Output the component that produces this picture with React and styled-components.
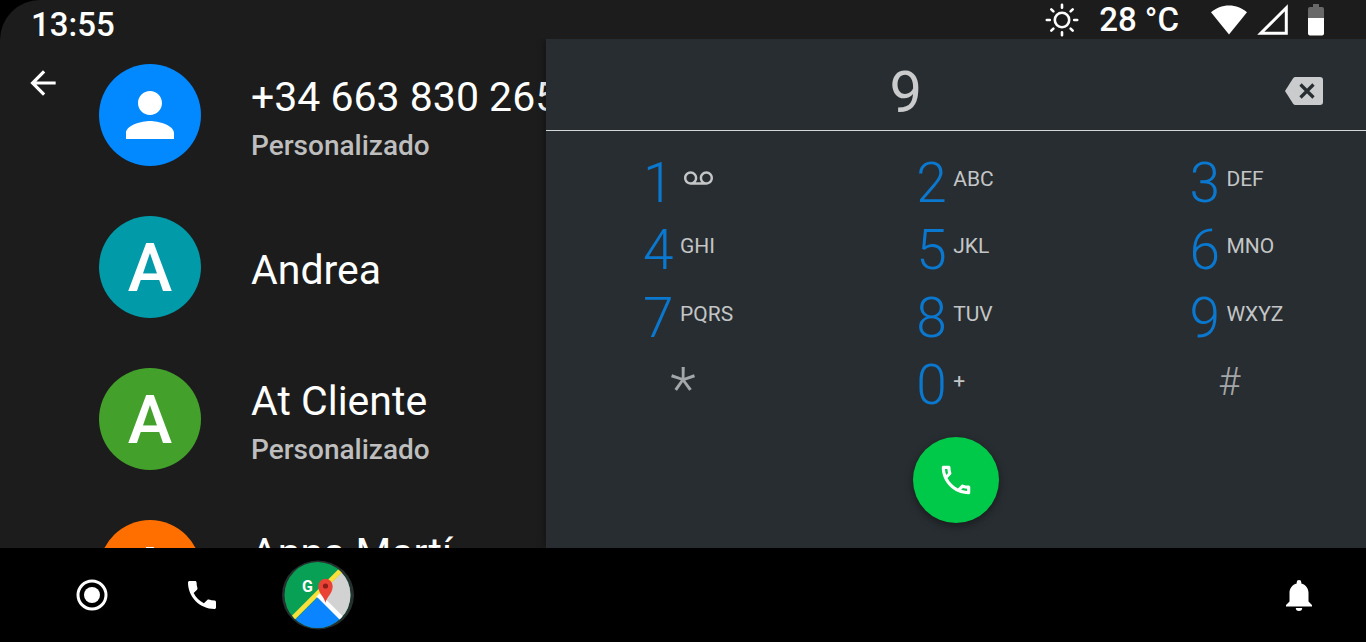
import React from 'react';
import styled, { createGlobalStyle } from 'styled-components';

const contacts = [
    { id: 1, name: '+34 663 830 265', label: 'Personalizado', color: '#0288ff' },
    { id: 2, name: 'Andrea', letter: 'A', color: '#009aa9' },
    { id: 3, name: 'At Cliente', label: 'Personalizado', letter: 'A', color: '#43a12b' },
    { id: 4, name: 'Anna Martí', label: '', letter: 'A', color: '#ff6f00' },
];

const keys = [
    { digit: '1', voicemail: true },
    { digit: '2', letters: 'ABC' },
    { digit: '3', letters: 'DEF' },
    { digit: '4', letters: 'GHI' },
    { digit: '5', letters: 'JKL' },
    { digit: '6', letters: 'MNO' },
    { digit: '7', letters: 'PQRS' },
    { digit: '8', letters: 'TUV' },
    { digit: '9', letters: 'WXYZ' },
    { digit: '*' },
    { digit: '0', letters: '+' },
    { digit: '#' },
];

const SunIcon = () => (
    <svg width="34" height="34" viewBox="0 0 34 34" fill="none" stroke="#fff" strokeWidth="2.6" strokeLinecap="round">
        <circle cx="17" cy="17" r="7.2" />
        <path d="M17 1.8v3M17 29.2v3M1.8 17h3M29.2 17h3M6.3 6.3l2.1 2.1M25.6 25.6l2.1 2.1M6.3 27.7l2.1-2.1M25.6 8.4l2.1-2.1" />
    </svg>
);

const WifiIcon = () => (
    <svg width="36" height="30" viewBox="0 0 36 30" fill="#fff">
        <path d="M18 29.5L0 7.2C5 3 11.2 .5 18 .5s13 2.5 18 6.7z" />
    </svg>
);

const SignalIcon = () => (
    <svg width="31" height="31" viewBox="0 0 31 31" fill="none" stroke="#fff" strokeWidth="3">
        <path d="M29.3 3.8V29.3H3.8z" />
    </svg>
);

const BatteryIcon = () => (
    <svg width="16" height="32" viewBox="0 0 16 32">
        <path d="M5 0h6v3h3a2 2 0 0 1 2 2v9H0V5a2 2 0 0 1 2-2h3z" fill="#686868" />
        <path d="M0 14h16v15.5a2 2 0 0 1-2 2H2a2 2 0 0 1-2-2z" fill="#fff" />
    </svg>
);

const BackIcon = () => (
    <svg width="38" height="38" viewBox="0 0 24 24" fill="#fff">
        <path d="M20 11H7.83l5.59-5.59L12 4l-8 8 8 8 1.41-1.41L7.83 13H20z" />
    </svg>
);

const PersonIcon = () => (
    <svg width="48" height="48" viewBox="4 4 16 16" fill="#fff">
        <path d="M12 12c2.21 0 4-1.79 4-4s-1.79-4-4-4-4 1.79-4 4 1.79 4 4 4zm0 2c-2.67 0-8 1.34-8 4v2h16v-2c0-2.66-5.33-4-8-4z" />
    </svg>
);

const BackspaceIcon = () => (
    <svg width="38" height="28" viewBox="0 0 38 28">
        <path d="M10.5 0H35a3 3 0 0 1 3 3v22a3 3 0 0 1-3 3H10.5a3 3 0 0 1-2.4-1.3L0 14 8.1 1.3A3 3 0 0 1 10.5 0z" fill="#c9cbcc" />
        <path d="M15.5 7.5l13 13M28.5 7.5l-13 13" stroke="#282d31" strokeWidth="3.2" />
    </svg>
);

const VoicemailIcon = () => (
    <svg width="29" height="14" viewBox="0 6 24 11" fill="#c3c5c6">
        <path d="M18.5 6C15.46 6 13 8.46 13 11.5c0 1.33.47 2.55 1.26 3.5H9.74c.79-.95 1.26-2.17 1.26-3.5C11 8.46 8.54 6 5.5 6S0 8.46 0 11.5 2.46 17 5.5 17h13c3.04 0 5.5-2.46 5.5-5.5S21.54 6 18.5 6zm-13 9C3.57 15 2 13.43 2 11.5S3.57 8 5.5 8 9 9.57 9 11.5 7.43 15 5.5 15zm13 0c-1.93 0-3.5-1.57-3.5-3.5S16.57 8 18.5 8 22 9.57 22 11.5 20.43 15 18.5 15z" />
    </svg>
);

const CallIcon = () => (
    <svg width="38" height="38" viewBox="0 0 24 24" fill="#fff">
        <path d="M6.54 5c.06.89.21 1.76.45 2.59l-1.2 1.2c-.41-1.2-.67-2.47-.76-3.79h1.51m9.86 12.02c.85.24 1.72.39 2.6.45v1.49c-1.32-.09-2.59-.35-3.8-.75l1.2-1.19M7.5 3H4c-.55 0-1 .45-1 1 0 9.39 7.61 17 17 17 .55 0 1-.45 1-1v-3.49c0-.55-.45-1-1-1-1.24 0-2.45-.2-3.57-.57-.1-.04-.21-.05-.31-.05-.26 0-.51.1-.71.29l-2.2 2.2c-2.83-1.45-5.15-3.76-6.59-6.59l2.2-2.2c.28-.28.36-.67.25-1.02C8.7 6.45 8.5 5.25 8.5 4c0-.55-.45-1-1-1z" />
    </svg>
);

const HomeIcon = () => (
    <svg width="32" height="32" viewBox="0 0 32 32">
        <circle cx="16" cy="16" r="14" fill="none" stroke="#fff" strokeWidth="3" />
        <circle cx="16" cy="16" r="8" fill="#fff" />
    </svg>
);

const PhoneIcon = () => (
    <svg width="28" height="28" viewBox="3 3 18 18" fill="#fff">
        <path d="M6.62 10.79c1.44 2.83 3.76 5.14 6.59 6.59l2.2-2.2c.27-.27.67-.36 1.02-.24 1.12.37 2.33.57 3.57.57.55 0 1 .45 1 1V20c0 .55-.45 1-1 1-9.39 0-17-7.61-17-17 0-.55.45-1 1-1h3.5c.55 0 1 .45 1 1 0 1.25.2 2.45.57 3.57.11.35.03.74-.25 1.02l-2.2 2.2z" />
    </svg>
);

const MapsIcon = () => (
    <svg width="72" height="70" viewBox="0 0 72 70">
        <defs>
            <clipPath id="mapDisc">
                <circle cx="35.5" cy="35" r="33" />
            </clipPath>
        </defs>
        <ellipse cx="36" cy="35" rx="36" ry="34.5" fill="#25302f" />
        <g clipPath="url(#mapDisc)">
            <rect width="72" height="70" fill="#08a055" />
            <path d="M35 37L72 0v70z" fill="#d2d2d2" />
            <path d="M6 63L62 7" stroke="#f9e03a" strokeWidth="4.6" />
            <path d="M36 35l30 30" stroke="#fff" strokeWidth="5" />
            <path d="M35.5 37.5L69 71H2z" fill="#0a84ff" />
        </g>
        <text x="20" y="32" fill="#fff" fontFamily="Roboto, sans-serif" fontWeight="700" fontSize="16">G</text>
        <path d="M43.5 43c-.8-6-7.2-9-7.2-17a7.2 7.2 0 0 1 14.4 0c0 8-6.4 11-7.2 17z" fill="#ea4335" />
        <circle cx="43.5" cy="26" r="2.6" fill="#8c1d18" />
    </svg>
);

const BellIcon = () => (
    <svg width="26" height="31" viewBox="0 0 26 31" fill="#fff">
        <path d="M13 0a2.3 2.3 0 0 0-2.3 2.3v1.2C6.3 4.6 3.5 8.4 3.5 13v8.5L0 25v1.5h26V25l-3.5-3.5V13c0-4.6-2.8-8.4-7.2-9.5V2.3A2.3 2.3 0 0 0 13 0z" />
        <path d="M9.8 28h6.4a3.2 3 0 0 1-6.4 0z" />
    </svg>
);

const App = () => {
    const [number, setNumber] = React.useState('9');

    return (
        <>
            <GlobalStyles />
            <Wrapper>
                <Screen>
                    <StatusBar>
                        <Clock>13:55</Clock>
                        <StatusItems>
                            <SunIcon />
                            <Temperature>28 °C</Temperature>
                            <WifiIcon />
                            <SignalIcon />
                            <Battery>
                                <BatteryIcon />
                            </Battery>
                        </StatusItems>
                    </StatusBar>
                    <Content>
                        <ContactsPanel>
                            <BackButton aria-label="Atrás">
                                <BackIcon />
                            </BackButton>
                            <ContactList>
                                {contacts.map((contact) => (
                                    <Contact key={contact.id}>
                                        <Avatar $color={contact.color}>
                                            {contact.letter ? <Initial>{contact.letter}</Initial> : <PersonIcon />}
                                        </Avatar>
                                        <ContactText>
                                            <Name>{contact.name}</Name>
                                            {contact.label !== undefined && <Label>{contact.label}</Label>}
                                        </ContactText>
                                    </Contact>
                                ))}
                            </ContactList>
                        </ContactsPanel>
                        <Dialer>
                            <NumberRow>
                                <NumberInput
                                    type="text"
                                    aria-label="Número"
                                    value={number}
                                    onChange={(ev) => setNumber(ev.target.value)}
                                />
                                <DeleteButton aria-label="Borrar" onClick={() => setNumber(number.slice(0, -1))}>
                                    <BackspaceIcon />
                                </DeleteButton>
                            </NumberRow>
                            <Keypad>
                                {keys.map(({ digit, letters, voicemail }) => {
                                    const isSymbol = !letters && !voicemail;
                                    return (
                                        <Key key={digit} onClick={() => setNumber(number + digit)}>
                                            {isSymbol ? (
                                                <KeySymbol $large={digit === '*'}>{digit}</KeySymbol>
                                            ) : (
                                                <KeyGroup>
                                                    <Digit>{digit}</Digit>
                                                    {voicemail ? <Voicemail><VoicemailIcon /></Voicemail> : <Letters>{letters}</Letters>}
                                                </KeyGroup>
                                            )}
                                        </Key>
                                    );
                                })}
                            </Keypad>
                            <CallButton aria-label="Llamar">
                                <CallIcon />
                            </CallButton>
                        </Dialer>
                    </Content>
                </Screen>
                <NavBar>
                    <NavGroup>
                        <NavButton $width="110px" aria-label="Inicio"><HomeIcon /></NavButton>
                        <NavButton $width="110px" aria-label="Teléfono"><PhoneIcon /></NavButton>
                        <NavButton $width="122px" aria-label="Maps"><MapsIcon /></NavButton>
                    </NavGroup>
                    <NavButton $width="72px" aria-label="Notificaciones"><BellIcon /></NavButton>
                </NavBar>
            </Wrapper>
        </>
    );
};

const GlobalStyles = createGlobalStyle`
    * {
        box-sizing: border-box;
    }
    body {
        margin: 0;
        background: #000;
        color: #fff;
        font-family: Roboto, sans-serif;
    }
    button {
        display: flex;
        align-items: center;
        justify-content: center;
        padding: 0;
        border: none;
        background: none;
        color: inherit;
        font-family: inherit;
        cursor: pointer;
    }
    svg {
        display: block;
        flex-shrink: 0;
    }
`

const Wrapper = styled.div`
    display: flex;
    flex-direction: column;
    height: 100vh;
    overflow: hidden;
`

const Screen = styled.main`
    display: flex;
    flex-direction: column;
    flex: 1;
    min-height: 0;
    background: #1c1c1c;
    border-top-left-radius: 40px;
`

const StatusBar = styled.header`
    display: flex;
    align-items: center;
    justify-content: space-between;
    flex-shrink: 0;
    height: 39px;
    padding: 0 42px 0 31px;
    font-size: 33px;
    font-weight: 500;
    line-height: 39px;
`

const Clock = styled.time`
    padding-top: 10px;
`

const StatusItems = styled.div`
    display: flex;
    align-items: center;
    gap: 10px;
`

const Temperature = styled.span`
    margin: 0 22px 0 10px;
`

const Battery = styled.span`
    margin-left: 10px;
`

const Content = styled.div`
    display: flex;
    flex: 1;
    min-height: 0;
`

const ContactsPanel = styled.section`
    display: flex;
    align-items: flex-start;
    flex: 2;
    min-width: 0;
    overflow: hidden;
`

const BackButton = styled.button`
    margin: 25px 37px 0 24px;
`

const ContactList = styled.ul`
    margin: 0;
    padding: 0;
    list-style: none;
`

const Contact = styled.li`
    display: flex;
    align-items: center;
    gap: 50px;
    height: 152px;
    white-space: nowrap;
`

const Avatar = styled.div`
    display: flex;
    align-items: center;
    justify-content: center;
    flex-shrink: 0;
    width: 102px;
    height: 102px;
    border-radius: 50%;
    background: ${(props) => props.$color};
`

const Initial = styled.span`
    padding-top: 2px;
    font-size: 67px;
    font-weight: 500;
`

const ContactText = styled.div`
    padding-top: 5px;
`

const Name = styled.div`
    font-size: 41px;
    line-height: 56px;
`

const Label = styled.div`
    height: 42px;
    color: #bebebe;
    font-size: 28px;
    font-weight: 500;
    line-height: 42px;
`

const Dialer = styled.section`
    display: flex;
    flex-direction: column;
    align-items: center;
    flex: 3;
    min-width: 0;
    padding-bottom: 25px;
    background: #282d31;
    box-shadow: 0 0 8px rgba(0, 0, 0, 0.4);
    clip-path: inset(0 0 0 -12px);
`

const NumberRow = styled.div`
    display: flex;
    flex-shrink: 0;
    width: 100%;
    height: 92px;
    border-bottom: 1px solid #d4d6d7;
`

const NumberInput = styled.input`
    flex: 1;
    min-width: 0;
    padding: 14px 0 0;
    border: none;
    outline: none;
    background: none;
    color: #c9cbcc;
    font-family: inherit;
    font-size: 58px;
    text-align: center;
`

const DeleteButton = styled.button`
    width: 101px;
    padding: 12px 23px 0 0;
`

const Keypad = styled.div`
    display: grid;
    grid-template-columns: repeat(3, 1fr);
    grid-template-rows: repeat(4, minmax(0, 1fr));
    flex: 1;
    width: 100%;
    margin: 18px 0;
`

const Key = styled.button`
    min-height: 0;
`

const KeyGroup = styled.span`
    display: flex;
    align-items: flex-start;
    width: 80px;
`

const Digit = styled.span`
    flex: 0 0 37px;
    color: #0b78d0;
    font-size: 55px;
    font-weight: 300;
    line-height: 66px;
    text-align: left;
`

const Letters = styled.span`
    color: #c3c5c6;
    font-size: 21px;
    line-height: 58px;
`

const Voicemail = styled.span`
    padding: 21px 0 0 4px;
`

const KeySymbol = styled.span`
    color: #a4a7a9;
    font-size: ${(props) => (props.$large ? '60px' : '38px')};
    font-weight: 300;
    line-height: 58px;
    padding: ${(props) => (props.$large ? '8px 0 0' : '0 0 6px')};
`

const CallButton = styled.button`
    flex-shrink: 0;
    width: 86px;
    height: 86px;
    border-radius: 50%;
    background: #00c848;
    box-shadow: 0 3px 8px rgba(0, 0, 0, 0.4);
`

const NavBar = styled.nav`
    display: flex;
    align-items: center;
    justify-content: space-between;
    flex-shrink: 0;
    height: 94px;
    padding: 0 31px 0 37px;
    background: #000;
`

const NavGroup = styled.div`
    display: flex;
`

const NavButton = styled.button`
    width: ${(props) => props.$width};
    height: 72px;
`

export default App
